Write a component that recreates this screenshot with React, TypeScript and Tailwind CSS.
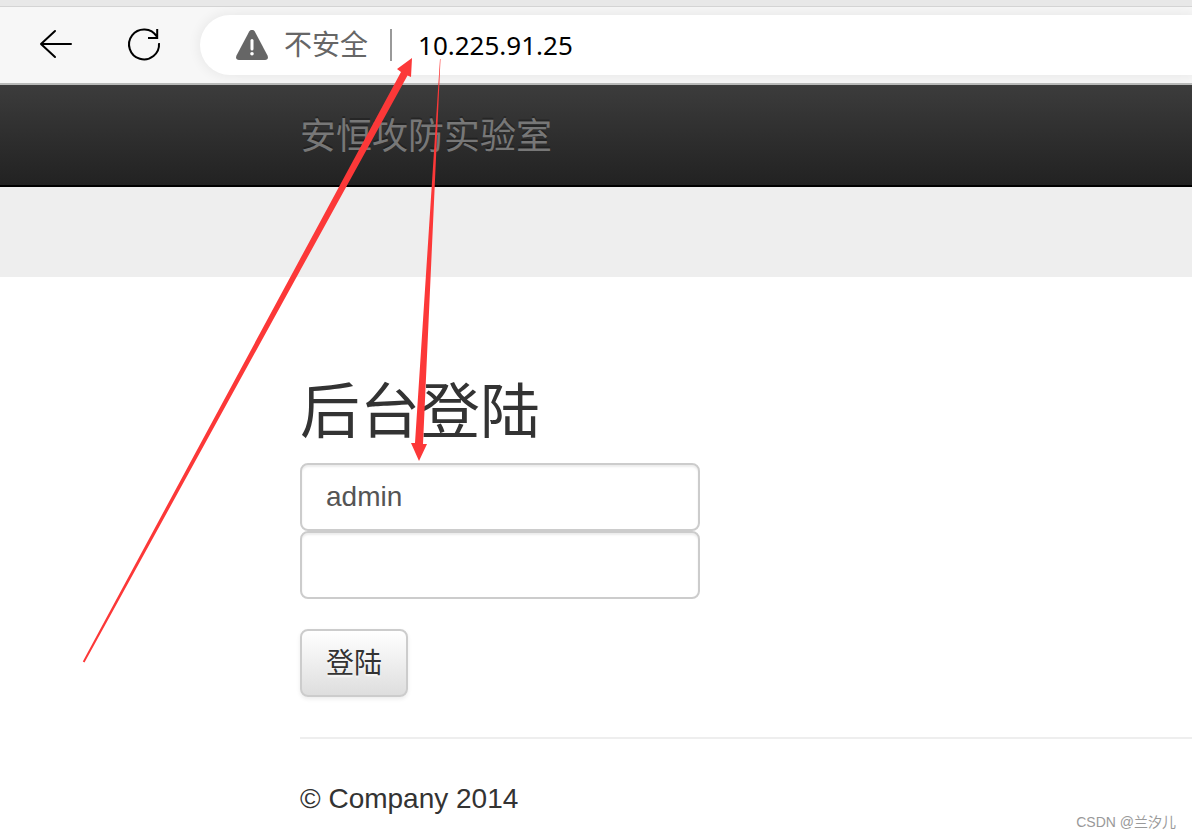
function BrowserBar() {
  return (
    <header>
      <div className="h-[7px] border-b border-[#d4d4d4] bg-[#e8e8e8]" />
      <div className="flex items-center overflow-hidden border-b-2 border-[#b9bab9] bg-[#f7f7f7] py-2">
        <div className="flex w-50 shrink-0 items-center">
          <button type="button" aria-label="返回" className="ml-9 h-10 w-10">
            <svg viewBox="0 0 40 40" width="40" height="40" fill="none" stroke="#000" strokeWidth="2" strokeLinecap="round" strokeLinejoin="round">
              <path d="M35 19H5M19 6L5 19l14 13" />
            </svg>
          </button>
          <button type="button" aria-label="刷新" className="ml-12 h-10 w-10">
            <svg viewBox="0 0 40 40" width="40" height="40" fill="none" stroke="#000" strokeWidth="2">
              <path d="M35 18.200A15 15 0 1 1 32.800 11.500M33.200 4v9H24" />
            </svg>
          </button>
        </div>
        <div className="flex h-15 grow items-center rounded-l-full bg-white pl-9 shadow-[0_0_12px_2px_rgba(0,0,0,0.06)]">
          <svg viewBox="0 0 32 30" width="32" height="30" className="shrink-0" aria-hidden="true">
            <path d="M13.200 1.500Q16-2 18.800 1.500L31.500 25.500Q33 29.500 29 30H3Q-1 29.500.5 25.500Z" fill="#666" />
            <path d="M16 10.500v8.500" stroke="#fff" strokeWidth="3" strokeLinecap="round" />
            <circle cx="16" cy="23.700" r="1.800" fill="#fff" />
          </svg>
          <span className="ml-4 shrink-0 pt-0.5 text-[28px] leading-10 text-[#666]">不安全</span>
          <span className="ml-[22px] h-8 w-0.5 shrink-0 bg-[#999]" />
          <input
            aria-label="地址"
            defaultValue="10.225.91.25"
            className="ml-[26px] min-w-0 grow bg-transparent font-['Noto_Sans',sans-serif] text-[26px] leading-10 text-black outline-none"
          />
        </div>
      </div>
    </header>
  );
}

function Arrows() {
  return (
    <svg width="480" height="680" viewBox="0 0 480 680" className="pointer-events-none absolute top-0 left-0" fill="#fc3838" aria-hidden="true">
      <path d="M82.800 661.500L401 72L397 69L412 58L411 77L407.500 75.500L84.500 662.500Z" />
      <path d="M440.500 59L423 444L427 444L419 461L411 443L415 443L440 59Z" />
    </svg>
  );
}

const fieldClass =
  "block h-17 w-100 max-w-full rounded-lg border-2 border-[#ccc] bg-white px-6 text-[28px] leading-10 text-[#555] shadow-[inset_0_2px_2px_rgba(0,0,0,0.075)] outline-none";

export default function App() {
  return (
    <div className="relative min-h-screen bg-white font-['Liberation_Sans','Noto_Sans_CJK_SC',sans-serif] text-[28px] leading-10 text-[#333]">
      <BrowserBar />
      <nav className="border-b-2 border-black bg-linear-to-b from-[#3c3c3c] to-[#222] pt-8 pb-7 pl-[300px]">
        <a href="#" className="block text-4xl leading-10 text-[#777] [text-shadow:0_-2px_0_rgba(0,0,0,0.25)]">
          安恒攻防实验室
        </a>
      </nav>
      <div className="h-[90px] bg-[#eee]" />
      <main className="pt-24 pl-[300px]">
        <form onSubmit={(e) => e.preventDefault()}>
          <h2 className="mb-[10px] text-[60px] leading-20">后台登陆</h2>
          <input type="text" aria-label="用户名" defaultValue="admin" className={fieldClass} />
          <input type="password" aria-label="密码" className={fieldClass} />
          <button
            type="submit"
            className="mt-[30px] block h-17 rounded-lg border-2 border-[#ccc] bg-linear-to-b from-white to-[#dedede] px-6 pt-0.5 text-[28px] leading-10 text-[#333] shadow-[0_2px_4px_rgba(0,0,0,0.08)] [text-shadow:0_2px_2px_rgba(255,255,255,0.75)]"
          >
            登陆
          </button>
        </form>
        <hr className="mt-10 mb-10 border-t-2 border-[#eee]" />
        <footer>
          <p>© Company 2014</p>
        </footer>
      </main>
      <Arrows />
      <span className="absolute right-4 bottom-2 text-sm leading-5 text-[#999]">CSDN @兰汐儿</span>
    </div>
  );
}
